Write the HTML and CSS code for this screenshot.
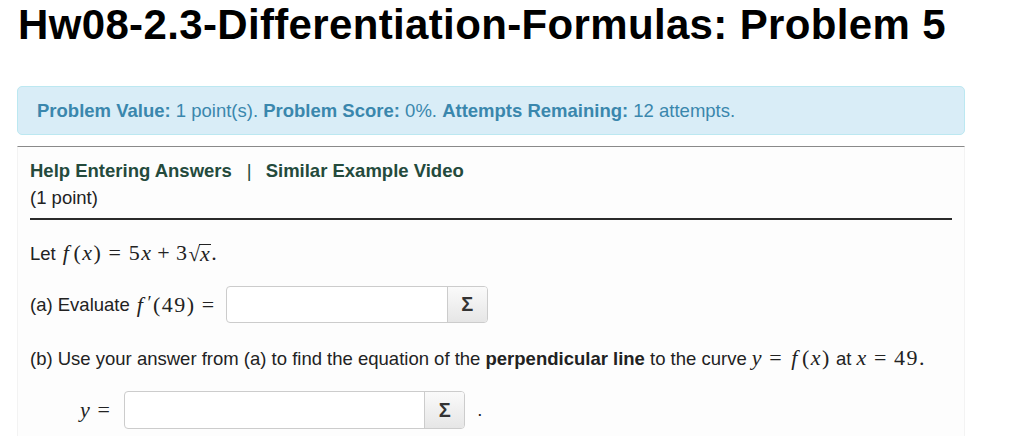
FILE: index.html
```html
<!DOCTYPE html>
<html>
<head>
<meta charset="utf-8">
<link rel="stylesheet" href="styles.css">
</head>
<body>
<h1 class="title">Hw08-2.3-Differentiation-Formulas: Problem 5</h1>
<div class="alert">
  <b>Problem Value:</b> 1 point(s). <b>Problem Score:</b> 0%. <b>Attempts Remaining:</b> 12 attempts.
</div>
<div class="problem">
  <div class="links"><a>Help Entering Answers</a><span class="sep">|</span><a>Similar Example Video</a></div>
  <div class="points">(1 point)</div>
  <div class="rule"></div>
  <p class="line l1">Let <span class="m"><i class="f">f</i>(<i>x</i>)<span class="rel">=</span>5<i>x</i><span class="bin">+</span>3<span class="rad">√</span><span class="radx"><i>x</i></span>.</span></p>
  <div class="row l2"><span class="lbl">(a) Evaluate</span><span class="m ma"><i class="f">f</i><span class="prime">′</span>(49)<span class="rel last">=</span></span><span class="ans a1"><span class="field"></span><span class="sigma">Σ</span></span></div>
  <p class="line l3">(b) Use your answer from (a) to find the equation of the <b>perpendicular line</b> to the curve <span class="m"><i>y</i><span class="rel">=</span><i class="f">f</i>(<i>x</i>)</span> at <span class="m"><i>x</i><span class="rel">=</span>49.</span></p>
  <div class="row l4"><span class="m yeq"><i>y</i><span class="rel last">=</span></span><span class="ans wide"><span class="field"></span><span class="sigma">Σ</span></span><span class="dot">.</span></div>
</div>
</body>
</html>
```
FILE: styles.css
```css
html, body { margin: 0; padding: 0; background: #fff; }
body {
  font-family: "Liberation Sans", Arial, sans-serif;
  color: #222;
  padding: 0 59px 0 17px;
}
.title {
  margin: 0;
  padding: 1px 0 0 1px;
  font-size: 42px;
  line-height: 48px;
  font-weight: bold;
  color: #000;
  letter-spacing: 0.35px;
  white-space: nowrap;
}
.alert {
  margin-top: 37px;
  height: 49px;
  box-sizing: border-box;
  background: #d9edf7;
  border: 1px solid #bce8f1;
  border-radius: 5px;
  color: #3a87ad;
  font-size: 18.5px;
  line-height: 47px;
  padding: 0 19px;
  white-space: nowrap;
}
.alert b { color: #3a87ad; }
.problem {
  margin-top: 11px;
  border-top: 1px solid #8a8a8a;
  background: #fdfdfd;
  border-left: 1px solid #f3f3f3;
  border-right: 1px solid #f3f3f3;
  padding: 13px 12px 10px 12px;
  font-size: 18.5px;
}
.links { font-weight: bold; color: #244a3c; line-height: 22px; white-space: nowrap; }
.links .sep { color: #244a3c; font-weight: normal; margin: 0 14px 0 15px; }
.points { line-height: 22px; margin-top: 5px; }
.rule { border-top: 2px solid #2a2a2a; margin-top: 9px; }
.line { margin: 0; line-height: 28px; white-space: nowrap; }
.row { display: flex; align-items: center; }
.l1 { margin-top: 19px; }
.l2 { margin-top: 18px; height: 37px; }
.l3 { margin-top: 21px; }
.l4 { margin-top: 18px; height: 38px; padding-left: 50px; }
.m {
  font-family: "Liberation Serif", "Times New Roman", serif;
  font-size: 22px;
  letter-spacing: 1.5px;
  white-space: pre;
}
.m i { font-style: italic; }
.m i.f { margin-left: 2px; margin-right: 3px; }
.prime { font-size: 19px; position: relative; top: -3px; margin-right: 0; }
.rel { margin: 0 0.28em; }
.rel.last { margin-right: 0; }
.bin { margin: 0 0.22em; }
.ma { margin-left: 5px; }
.rad { font-size: 21px; letter-spacing: 0; position: relative; top: 1px; }
.radx {
  display: inline-block;
  border-top: 1.5px solid #222;
  padding: 0 0 0 1px;
  line-height: 17px;
  margin-left: -1px;
  vertical-align: -1px;
}
.yeq { margin-left: 0; }
.ans {
  display: inline-flex;
  margin-left: 13px;
  width: 262px;
  height: 37px;
  box-sizing: border-box;
  border: 1px solid #ccc;
  border-radius: 4px;
  background: #fff;
  overflow: hidden;
}
.ans.a1 { margin-left: 10px; }
.ans.wide { width: 341px; height: 38px; margin-left: 13px; }
.field { flex: 1; }
.sigma {
  width: 39px;
  border-left: 1px solid #ccc;
  background: linear-gradient(#fafafa, #e6e6e6);
  display: flex;
  align-items: center;
  justify-content: center;
  font-weight: bold;
  font-size: 20px;
  color: #333;
}
.dot { margin-left: 12px; font-size: 18.5px; }
```
